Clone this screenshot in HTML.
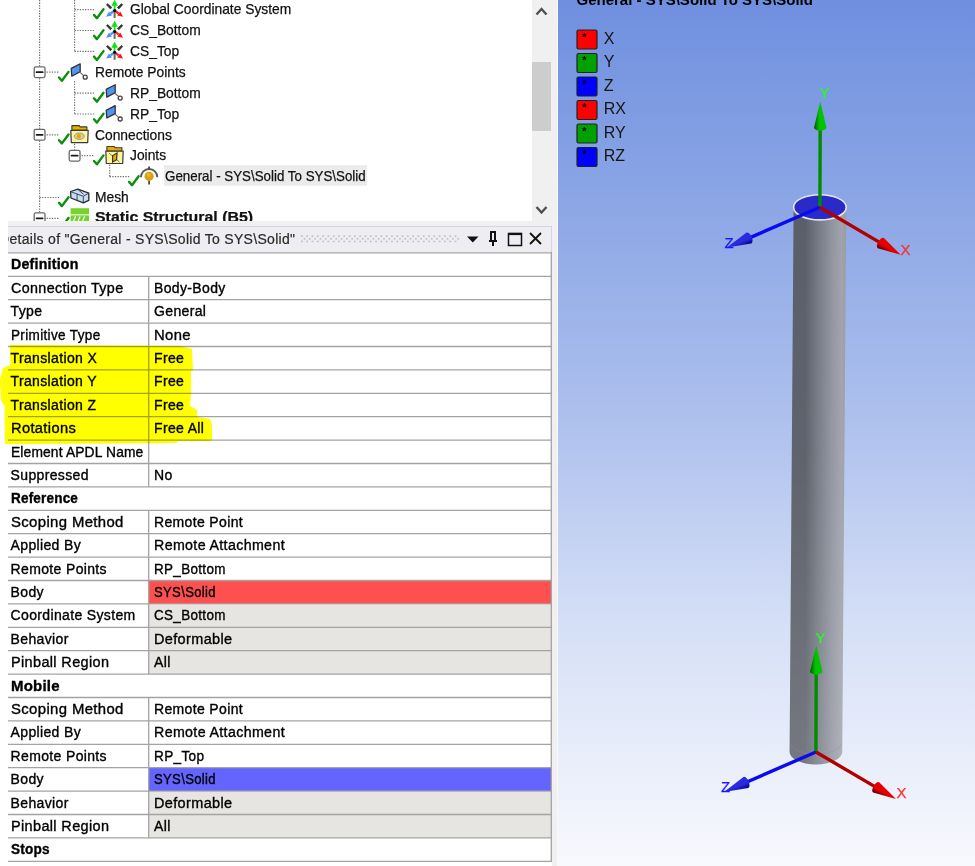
<!DOCTYPE html>
<html><head><meta charset="utf-8">
<style>
html,body{margin:0;padding:0;}
body{width:975px;height:866px;position:relative;overflow:hidden;background:#fff;font-family:"Liberation Sans",sans-serif;}
.a{position:absolute;}
.t{position:absolute;white-space:pre;font-size:14.5px;color:#111;line-height:16px;-webkit-text-stroke:0.25px #111;transform:scaleX(0.953);transform-origin:0 0;}
.c{position:absolute;white-space:pre;font-size:14px;color:#000;line-height:16px;letter-spacing:0.35px;-webkit-text-stroke:0.35px #000;}
.hl{position:absolute;left:0;height:1px;background:#a7a7a7;}
</style></head><body>
<div class="a" style="left:0;top:0;width:532px;height:221px;background:#fff;overflow:hidden"><svg class="a" style="left:0;top:0" width="532" height="221"><rect x="164" y="165.2" width="203" height="20.5" fill="#ebebeb"/><line x1="39.6" y1="0" x2="39.6" y2="66.2" stroke="#707070" stroke-width="1.2" stroke-dasharray="1.3 1.3"/><line x1="39.6" y1="78.2" x2="39.6" y2="128.8" stroke="#707070" stroke-width="1.2" stroke-dasharray="1.3 1.3"/><line x1="39.6" y1="140.8" x2="39.6" y2="212.3" stroke="#707070" stroke-width="1.2" stroke-dasharray="1.3 1.3"/><line x1="74.6" y1="0" x2="74.6" y2="51.4" stroke="#707070" stroke-width="1.2" stroke-dasharray="1.3 1.3"/><line x1="74.6" y1="81.2" x2="74.6" y2="114.0" stroke="#707070" stroke-width="1.2" stroke-dasharray="1.3 1.3"/><line x1="74.6" y1="143.8" x2="74.6" y2="149.7" stroke="#707070" stroke-width="1.2" stroke-dasharray="1.3 1.3"/><line x1="109.7" y1="164.7" x2="109.7" y2="176.6" stroke="#707070" stroke-width="1.2" stroke-dasharray="1.3 1.3"/><line x1="74.6" y1="9.6" x2="94.1" y2="9.6" stroke="#707070" stroke-width="1.2" stroke-dasharray="1.3 1.3"/><g transform="translate(105.6,0.0)"><path d="M0.9 4.7 L2.1 3.7 L6.2 7.5 L4.7 8.9Z" fill="#333" stroke="#333" stroke-width="0.8" stroke-linejoin="round"/><path d="M17.1 4.7 L15.9 3.7 L11.8 7.5 L13.3 8.9Z" fill="#333" stroke="#333" stroke-width="0.8" stroke-linejoin="round"/><line x1="9" y1="11" x2="9" y2="18" stroke="#6a6a6a" stroke-width="2"/><line x1="9" y1="10.5" x2="9" y2="5" stroke="#18e018" stroke-width="1.8"/><path d="M9 0.4 L6.2 5.6 L11.8 5.6Z" fill="#10e010" stroke="#10e010" stroke-width="0.6" stroke-linejoin="round"/><line x1="9" y1="10.5" x2="13" y2="13.5" stroke="#ff2020" stroke-width="2.2"/><path d="M17.5 16.8 L11.6 15.6 L14.6 11.6Z" fill="#ff1010"/><line x1="9" y1="10.5" x2="5" y2="13.5" stroke="#4a90f0" stroke-width="2.2"/><path d="M0.5 16.8 L3.4 11.6 L6.4 15.6Z" fill="#4a90f0"/><circle cx="9" cy="10.5" r="1.5" fill="#000"/></g><path d="M94.0 14.9 L96.9 18.2 L103.5 9.3" fill="none" stroke="#0a900a" stroke-width="2.4" stroke-linejoin="round" stroke-linecap="round"/><line x1="74.6" y1="30.5" x2="94.1" y2="30.5" stroke="#707070" stroke-width="1.2" stroke-dasharray="1.3 1.3"/><g transform="translate(105.6,20.9)"><path d="M0.9 4.7 L2.1 3.7 L6.2 7.5 L4.7 8.9Z" fill="#333" stroke="#333" stroke-width="0.8" stroke-linejoin="round"/><path d="M17.1 4.7 L15.9 3.7 L11.8 7.5 L13.3 8.9Z" fill="#333" stroke="#333" stroke-width="0.8" stroke-linejoin="round"/><line x1="9" y1="11" x2="9" y2="18" stroke="#6a6a6a" stroke-width="2"/><line x1="9" y1="10.5" x2="9" y2="5" stroke="#18e018" stroke-width="1.8"/><path d="M9 0.4 L6.2 5.6 L11.8 5.6Z" fill="#10e010" stroke="#10e010" stroke-width="0.6" stroke-linejoin="round"/><line x1="9" y1="10.5" x2="13" y2="13.5" stroke="#ff2020" stroke-width="2.2"/><path d="M17.5 16.8 L11.6 15.6 L14.6 11.6Z" fill="#ff1010"/><line x1="9" y1="10.5" x2="5" y2="13.5" stroke="#4a90f0" stroke-width="2.2"/><path d="M0.5 16.8 L3.4 11.6 L6.4 15.6Z" fill="#4a90f0"/><circle cx="9" cy="10.5" r="1.5" fill="#000"/></g><path d="M94.0 35.8 L96.9 39.1 L103.5 30.2" fill="none" stroke="#0a900a" stroke-width="2.4" stroke-linejoin="round" stroke-linecap="round"/><line x1="74.6" y1="51.4" x2="94.1" y2="51.4" stroke="#707070" stroke-width="1.2" stroke-dasharray="1.3 1.3"/><g transform="translate(105.6,41.8)"><path d="M0.9 4.7 L2.1 3.7 L6.2 7.5 L4.7 8.9Z" fill="#333" stroke="#333" stroke-width="0.8" stroke-linejoin="round"/><path d="M17.1 4.7 L15.9 3.7 L11.8 7.5 L13.3 8.9Z" fill="#333" stroke="#333" stroke-width="0.8" stroke-linejoin="round"/><line x1="9" y1="11" x2="9" y2="18" stroke="#6a6a6a" stroke-width="2"/><line x1="9" y1="10.5" x2="9" y2="5" stroke="#18e018" stroke-width="1.8"/><path d="M9 0.4 L6.2 5.6 L11.8 5.6Z" fill="#10e010" stroke="#10e010" stroke-width="0.6" stroke-linejoin="round"/><line x1="9" y1="10.5" x2="13" y2="13.5" stroke="#ff2020" stroke-width="2.2"/><path d="M17.5 16.8 L11.6 15.6 L14.6 11.6Z" fill="#ff1010"/><line x1="9" y1="10.5" x2="5" y2="13.5" stroke="#4a90f0" stroke-width="2.2"/><path d="M0.5 16.8 L3.4 11.6 L6.4 15.6Z" fill="#4a90f0"/><circle cx="9" cy="10.5" r="1.5" fill="#000"/></g><path d="M94.0 56.6 L96.9 60.0 L103.5 51.1" fill="none" stroke="#0a900a" stroke-width="2.4" stroke-linejoin="round" stroke-linecap="round"/><rect x="34.2" y="66.8" width="10.8" height="10.8" rx="1.5" fill="#fff" stroke="#6a6a6a" stroke-width="1.3"/><line x1="36.5" y1="72.2" x2="42.7" y2="72.2" stroke="#1a1a1a" stroke-width="1.7" stroke-linecap="round"/><line x1="46.6" y1="72.2" x2="59.1" y2="72.2" stroke="#707070" stroke-width="1.2" stroke-dasharray="1.3 1.3"/><g transform="translate(70.6,62.6)"><path d="M0.6 5.8 L9.6 1.2 L9.6 9.2 L1.2 13.6Z" fill="#4f94f2" stroke="#2a2a2a" stroke-width="1.2" stroke-linejoin="round"/><line x1="9.5" y1="9.8" x2="13" y2="13" stroke="#666" stroke-width="1.1"/><circle cx="14.6" cy="14.6" r="2" fill="#fff" stroke="#444" stroke-width="1.3"/></g><path d="M59.0 77.5 L61.9 80.8 L68.5 71.9" fill="none" stroke="#0a900a" stroke-width="2.4" stroke-linejoin="round" stroke-linecap="round"/><line x1="74.6" y1="93.1" x2="94.1" y2="93.1" stroke="#707070" stroke-width="1.2" stroke-dasharray="1.3 1.3"/><g transform="translate(105.6,83.5)"><path d="M0.6 5.8 L9.6 1.2 L9.6 9.2 L1.2 13.6Z" fill="#4f94f2" stroke="#2a2a2a" stroke-width="1.2" stroke-linejoin="round"/><line x1="9.5" y1="9.8" x2="13" y2="13" stroke="#666" stroke-width="1.1"/><circle cx="14.6" cy="14.6" r="2" fill="#fff" stroke="#444" stroke-width="1.3"/></g><path d="M94.0 98.4 L96.9 101.7 L103.5 92.8" fill="none" stroke="#0a900a" stroke-width="2.4" stroke-linejoin="round" stroke-linecap="round"/><line x1="74.6" y1="114.0" x2="94.1" y2="114.0" stroke="#707070" stroke-width="1.2" stroke-dasharray="1.3 1.3"/><g transform="translate(105.6,104.4)"><path d="M0.6 5.8 L9.6 1.2 L9.6 9.2 L1.2 13.6Z" fill="#4f94f2" stroke="#2a2a2a" stroke-width="1.2" stroke-linejoin="round"/><line x1="9.5" y1="9.8" x2="13" y2="13" stroke="#666" stroke-width="1.1"/><circle cx="14.6" cy="14.6" r="2" fill="#fff" stroke="#444" stroke-width="1.3"/></g><path d="M94.0 119.3 L96.9 122.6 L103.5 113.7" fill="none" stroke="#0a900a" stroke-width="2.4" stroke-linejoin="round" stroke-linecap="round"/><rect x="34.2" y="129.4" width="10.8" height="10.8" rx="1.5" fill="#fff" stroke="#6a6a6a" stroke-width="1.3"/><line x1="36.5" y1="134.8" x2="42.7" y2="134.8" stroke="#1a1a1a" stroke-width="1.7" stroke-linecap="round"/><line x1="46.6" y1="134.8" x2="59.1" y2="134.8" stroke="#707070" stroke-width="1.2" stroke-dasharray="1.3 1.3"/><g transform="translate(70.6,125.2)"><path d="M1.3 5.2 L1.3 0.4 L8.6 0.4 L9.6 1.7 L16.3 1.7 L16.3 5.2Z" fill="#e6ae00" stroke="#3a3a3a" stroke-width="1.1" stroke-linejoin="round"/><path d="M0.2 5.1 L17.6 5.1 L17.1 17.4 L0.7 17.4Z" fill="#fdf6a0" stroke="#3a3a3a" stroke-width="1.2" stroke-linejoin="round"/><ellipse cx="8.7" cy="11" rx="5" ry="3.2" fill="#d8d0a0" stroke="#9a9070" stroke-width="0.9"/><ellipse cx="8.2" cy="11" rx="2" ry="2.2" fill="#e0a800"/></g><path d="M59.0 140.2 L61.9 143.4 L68.5 134.5" fill="none" stroke="#0a900a" stroke-width="2.4" stroke-linejoin="round" stroke-linecap="round"/><rect x="69.2" y="150.3" width="10.8" height="10.8" rx="1.5" fill="#fff" stroke="#6a6a6a" stroke-width="1.3"/><line x1="71.5" y1="155.7" x2="77.7" y2="155.7" stroke="#1a1a1a" stroke-width="1.7" stroke-linecap="round"/><line x1="81.6" y1="155.7" x2="94.1" y2="155.7" stroke="#707070" stroke-width="1.2" stroke-dasharray="1.3 1.3"/><g transform="translate(105.6,146.1)"><path d="M1.3 5.2 L1.3 0.4 L8.6 0.4 L9.6 1.7 L16.3 1.7 L16.3 5.2Z" fill="#e6ae00" stroke="#3a3a3a" stroke-width="1.1" stroke-linejoin="round"/><path d="M0.2 5.1 L17.6 5.1 L17.1 17.4 L0.7 17.4Z" fill="#fdf6a0" stroke="#3a3a3a" stroke-width="1.2" stroke-linejoin="round"/><path d="M3.5 7 L14 16" stroke="#555" stroke-width="0.8"/><path d="M7 9.5 L11.5 6.8 L11 13.5 L7 16Z" fill="#e8a800" stroke="#2a2a2a" stroke-width="1.1"/></g><path d="M94.0 161.0 L96.9 164.3 L103.5 155.4" fill="none" stroke="#0a900a" stroke-width="2.4" stroke-linejoin="round" stroke-linecap="round"/><line x1="109.7" y1="176.6" x2="129.2" y2="176.6" stroke="#707070" stroke-width="1.2" stroke-dasharray="1.3 1.3"/><g transform="translate(140.7,167.0)"><path d="M0.2 10.2 A8.2 8.2 0 0 1 16.6 10.2" fill="none" stroke="#555" stroke-width="1.8"/><line x1="8.4" y1="-0.5" x2="8.4" y2="2.5" stroke="#444" stroke-width="1.8"/><line x1="8.4" y1="12" x2="8.4" y2="17.5" stroke="#4a4a4a" stroke-width="1.8"/><circle cx="8.4" cy="9.3" r="4.6" fill="#d9a20c"/><circle cx="8" cy="8" r="2" fill="#e8c050" opacity="0.7"/></g><path d="M129.1 181.9 L132.0 185.2 L138.6 176.3" fill="none" stroke="#0a900a" stroke-width="2.4" stroke-linejoin="round" stroke-linecap="round"/><line x1="39.6" y1="197.5" x2="59.1" y2="197.5" stroke="#707070" stroke-width="1.2" stroke-dasharray="1.3 1.3"/><g transform="translate(70.6,187.9)"><path d="M0 3.6 L7.3 1.3 L18.2 5.2 L18.2 12.5 L12.7 14.9 L0.3 10.1Z" fill="#c4dcfa" stroke="#2a2a2a" stroke-width="1.3" stroke-linejoin="round"/><path d="M0.2 3.8 L12.7 8.4 L18 5.3 M12.7 8.4 L12.7 14.6 M6.5 6 L6.5 12.3 M7.3 1.5 L13 6.5" fill="none" stroke="#3a3a3a" stroke-width="0.9"/></g><path d="M59.0 202.8 L61.9 206.1 L68.5 197.2" fill="none" stroke="#0a900a" stroke-width="2.4" stroke-linejoin="round" stroke-linecap="round"/><rect x="34.2" y="212.9" width="10.8" height="10.8" rx="1.5" fill="#fff" stroke="#6a6a6a" stroke-width="1.3"/><line x1="36.5" y1="218.3" x2="42.7" y2="218.3" stroke="#1a1a1a" stroke-width="1.7" stroke-linecap="round"/><line x1="46.6" y1="218.3" x2="59.1" y2="218.3" stroke="#707070" stroke-width="1.2" stroke-dasharray="1.3 1.3"/><g transform="translate(70.6,208.2)"><rect x="0" y="0" width="18.5" height="14" fill="#78d22e"/><rect x="0" y="6.0" width="18.5" height="1.2" fill="#f0fff0"/><path d="M3 13 L5 8 M7.5 13 L9.5 8 M12 13 L14 8" stroke="#f0fff0" stroke-width="1.3"/></g><path d="M59.0 223.7 L61.9 226.9 L68.5 218.0" fill="none" stroke="#0a900a" stroke-width="2.4" stroke-linejoin="round" stroke-linecap="round"/></svg><div class="t" style="left:130.3px;top:1.3px;">Global Coordinate System</div><div class="t" style="left:130.3px;top:22.2px;">CS_Bottom</div><div class="t" style="left:130.3px;top:43.0px;">CS_Top</div><div class="t" style="left:95.3px;top:63.9px;">Remote Points</div><div class="t" style="left:130.3px;top:84.8px;">RP_Bottom</div><div class="t" style="left:130.3px;top:105.7px;">RP_Top</div><div class="t" style="left:95.3px;top:126.5px;">Connections</div><div class="t" style="left:130.3px;top:147.4px;">Joints</div><div class="t" style="left:165.4px;top:168.3px;transform:scaleX(0.92);">General - SYS\Solid To SYS\Solid</div><div class="t" style="left:95.3px;top:189.2px;">Mesh</div><div class="t" style="left:95.3px;top:209.2px;font-weight:bold;font-size:15.5px;transform:scaleX(1.025);">Static Structural (B5)</div></div><div class="a" style="left:532px;top:0;width:25px;height:221px;background:#f0f0f0"></div><div class="a" style="left:532px;top:62px;width:19px;height:69px;background:#cdcdcd"></div><svg class="a" style="left:532px;top:0" width="25" height="221"><path d="M4.5 14.5 L9.5 9 L14.5 14.5" fill="none" stroke="#505050" stroke-width="2.4"/><path d="M4.5 207 L9.5 212.5 L14.5 207" fill="none" stroke="#505050" stroke-width="2.4"/></svg><div class="a" style="left:8px;top:221px;width:549px;height:645px;background:#f0f0f0"></div><div class="a" style="left:8px;top:226px;width:544px;height:26px;background:#eeeef2;border-top:1px solid #d4d4e4;border-right:1px solid #d4d4e4;box-sizing:border-box;overflow:hidden"><div class="a" style="left:-9px;top:3.6px;white-space:pre;font-size:14px;color:#2a2a2a;letter-spacing:0.3px;-webkit-text-stroke:0.2px #2a2a2a">Details of "General - SYS\Solid To SYS\Solid"</div></div><svg class="a" style="left:301px;top:235px" width="160" height="9"><rect x="0.00" y="0.30" width="1.7" height="1.7" fill="#c0c0c6"/><rect x="0.00" y="5.60" width="1.7" height="1.7" fill="#c0c0c6"/><rect x="2.65" y="2.95" width="1.7" height="1.7" fill="#c0c0c6"/><rect x="5.30" y="0.30" width="1.7" height="1.7" fill="#c0c0c6"/><rect x="5.30" y="5.60" width="1.7" height="1.7" fill="#c0c0c6"/><rect x="7.95" y="2.95" width="1.7" height="1.7" fill="#c0c0c6"/><rect x="10.60" y="0.30" width="1.7" height="1.7" fill="#c0c0c6"/><rect x="10.60" y="5.60" width="1.7" height="1.7" fill="#c0c0c6"/><rect x="13.25" y="2.95" width="1.7" height="1.7" fill="#c0c0c6"/><rect x="15.90" y="0.30" width="1.7" height="1.7" fill="#c0c0c6"/><rect x="15.90" y="5.60" width="1.7" height="1.7" fill="#c0c0c6"/><rect x="18.55" y="2.95" width="1.7" height="1.7" fill="#c0c0c6"/><rect x="21.20" y="0.30" width="1.7" height="1.7" fill="#c0c0c6"/><rect x="21.20" y="5.60" width="1.7" height="1.7" fill="#c0c0c6"/><rect x="23.85" y="2.95" width="1.7" height="1.7" fill="#c0c0c6"/><rect x="26.50" y="0.30" width="1.7" height="1.7" fill="#c0c0c6"/><rect x="26.50" y="5.60" width="1.7" height="1.7" fill="#c0c0c6"/><rect x="29.15" y="2.95" width="1.7" height="1.7" fill="#c0c0c6"/><rect x="31.80" y="0.30" width="1.7" height="1.7" fill="#c0c0c6"/><rect x="31.80" y="5.60" width="1.7" height="1.7" fill="#c0c0c6"/><rect x="34.45" y="2.95" width="1.7" height="1.7" fill="#c0c0c6"/><rect x="37.10" y="0.30" width="1.7" height="1.7" fill="#c0c0c6"/><rect x="37.10" y="5.60" width="1.7" height="1.7" fill="#c0c0c6"/><rect x="39.75" y="2.95" width="1.7" height="1.7" fill="#c0c0c6"/><rect x="42.40" y="0.30" width="1.7" height="1.7" fill="#c0c0c6"/><rect x="42.40" y="5.60" width="1.7" height="1.7" fill="#c0c0c6"/><rect x="45.05" y="2.95" width="1.7" height="1.7" fill="#c0c0c6"/><rect x="47.70" y="0.30" width="1.7" height="1.7" fill="#c0c0c6"/><rect x="47.70" y="5.60" width="1.7" height="1.7" fill="#c0c0c6"/><rect x="50.35" y="2.95" width="1.7" height="1.7" fill="#c0c0c6"/><rect x="53.00" y="0.30" width="1.7" height="1.7" fill="#c0c0c6"/><rect x="53.00" y="5.60" width="1.7" height="1.7" fill="#c0c0c6"/><rect x="55.65" y="2.95" width="1.7" height="1.7" fill="#c0c0c6"/><rect x="58.30" y="0.30" width="1.7" height="1.7" fill="#c0c0c6"/><rect x="58.30" y="5.60" width="1.7" height="1.7" fill="#c0c0c6"/><rect x="60.95" y="2.95" width="1.7" height="1.7" fill="#c0c0c6"/><rect x="63.60" y="0.30" width="1.7" height="1.7" fill="#c0c0c6"/><rect x="63.60" y="5.60" width="1.7" height="1.7" fill="#c0c0c6"/><rect x="66.25" y="2.95" width="1.7" height="1.7" fill="#c0c0c6"/><rect x="68.90" y="0.30" width="1.7" height="1.7" fill="#c0c0c6"/><rect x="68.90" y="5.60" width="1.7" height="1.7" fill="#c0c0c6"/><rect x="71.55" y="2.95" width="1.7" height="1.7" fill="#c0c0c6"/><rect x="74.20" y="0.30" width="1.7" height="1.7" fill="#c0c0c6"/><rect x="74.20" y="5.60" width="1.7" height="1.7" fill="#c0c0c6"/><rect x="76.85" y="2.95" width="1.7" height="1.7" fill="#c0c0c6"/><rect x="79.50" y="0.30" width="1.7" height="1.7" fill="#c0c0c6"/><rect x="79.50" y="5.60" width="1.7" height="1.7" fill="#c0c0c6"/><rect x="82.15" y="2.95" width="1.7" height="1.7" fill="#c0c0c6"/><rect x="84.80" y="0.30" width="1.7" height="1.7" fill="#c0c0c6"/><rect x="84.80" y="5.60" width="1.7" height="1.7" fill="#c0c0c6"/><rect x="87.45" y="2.95" width="1.7" height="1.7" fill="#c0c0c6"/><rect x="90.10" y="0.30" width="1.7" height="1.7" fill="#c0c0c6"/><rect x="90.10" y="5.60" width="1.7" height="1.7" fill="#c0c0c6"/><rect x="92.75" y="2.95" width="1.7" height="1.7" fill="#c0c0c6"/><rect x="95.40" y="0.30" width="1.7" height="1.7" fill="#c0c0c6"/><rect x="95.40" y="5.60" width="1.7" height="1.7" fill="#c0c0c6"/><rect x="98.05" y="2.95" width="1.7" height="1.7" fill="#c0c0c6"/><rect x="100.70" y="0.30" width="1.7" height="1.7" fill="#c0c0c6"/><rect x="100.70" y="5.60" width="1.7" height="1.7" fill="#c0c0c6"/><rect x="103.35" y="2.95" width="1.7" height="1.7" fill="#c0c0c6"/><rect x="106.00" y="0.30" width="1.7" height="1.7" fill="#c0c0c6"/><rect x="106.00" y="5.60" width="1.7" height="1.7" fill="#c0c0c6"/><rect x="108.65" y="2.95" width="1.7" height="1.7" fill="#c0c0c6"/><rect x="111.30" y="0.30" width="1.7" height="1.7" fill="#c0c0c6"/><rect x="111.30" y="5.60" width="1.7" height="1.7" fill="#c0c0c6"/><rect x="113.95" y="2.95" width="1.7" height="1.7" fill="#c0c0c6"/><rect x="116.60" y="0.30" width="1.7" height="1.7" fill="#c0c0c6"/><rect x="116.60" y="5.60" width="1.7" height="1.7" fill="#c0c0c6"/><rect x="119.25" y="2.95" width="1.7" height="1.7" fill="#c0c0c6"/><rect x="121.90" y="0.30" width="1.7" height="1.7" fill="#c0c0c6"/><rect x="121.90" y="5.60" width="1.7" height="1.7" fill="#c0c0c6"/><rect x="124.55" y="2.95" width="1.7" height="1.7" fill="#c0c0c6"/><rect x="127.20" y="0.30" width="1.7" height="1.7" fill="#c0c0c6"/><rect x="127.20" y="5.60" width="1.7" height="1.7" fill="#c0c0c6"/><rect x="129.85" y="2.95" width="1.7" height="1.7" fill="#c0c0c6"/><rect x="132.50" y="0.30" width="1.7" height="1.7" fill="#c0c0c6"/><rect x="132.50" y="5.60" width="1.7" height="1.7" fill="#c0c0c6"/><rect x="135.15" y="2.95" width="1.7" height="1.7" fill="#c0c0c6"/><rect x="137.80" y="0.30" width="1.7" height="1.7" fill="#c0c0c6"/><rect x="137.80" y="5.60" width="1.7" height="1.7" fill="#c0c0c6"/><rect x="140.45" y="2.95" width="1.7" height="1.7" fill="#c0c0c6"/><rect x="143.10" y="0.30" width="1.7" height="1.7" fill="#c0c0c6"/><rect x="143.10" y="5.60" width="1.7" height="1.7" fill="#c0c0c6"/><rect x="145.75" y="2.95" width="1.7" height="1.7" fill="#c0c0c6"/><rect x="148.40" y="0.30" width="1.7" height="1.7" fill="#c0c0c6"/><rect x="148.40" y="5.60" width="1.7" height="1.7" fill="#c0c0c6"/><rect x="151.05" y="2.95" width="1.7" height="1.7" fill="#c0c0c6"/><rect x="153.70" y="0.30" width="1.7" height="1.7" fill="#c0c0c6"/><rect x="153.70" y="5.60" width="1.7" height="1.7" fill="#c0c0c6"/><rect x="156.35" y="2.95" width="1.7" height="1.7" fill="#c0c0c6"/></svg><svg class="a" style="left:460px;top:226px" width="92" height="26"><path d="M7 10.5 L18.5 10.5 L12.75 16.5Z" fill="#111"/><path d="M30 6 L36 6 M31 6 L31 15 M35 6 L35 15 M29 15 L37 15 M33 15 L33 20" fill="none" stroke="#111" stroke-width="2"/><rect x="48.5" y="7.5" width="13" height="12" fill="none" stroke="#111" stroke-width="1.5"/><line x1="48" y1="8" x2="62" y2="8" stroke="#111" stroke-width="2.2"/><path d="M70 7 L81 18 M81 7 L70 18" stroke="#111" stroke-width="1.8"/></svg><div class="a" style="left:8px;top:252px;width:544px;height:614px;background:#fff"></div><div class="a" style="left:149px;top:581.2px;width:402px;height:22.8px;background:#ff5050"></div><div class="a" style="left:149px;top:604.6px;width:402px;height:22.8px;background:#e7e5e2"></div><div class="a" style="left:149px;top:628.0px;width:402px;height:22.8px;background:#e7e5e2"></div><div class="a" style="left:149px;top:651.4px;width:402px;height:22.8px;background:#e7e5e2"></div><div class="a" style="left:149px;top:768.4px;width:402px;height:22.8px;background:#6464ff"></div><div class="a" style="left:149px;top:791.8px;width:402px;height:22.8px;background:#e7e5e2"></div><div class="a" style="left:149px;top:815.2px;width:402px;height:22.8px;background:#e7e5e2"></div><svg class="a" style="left:0;top:0" width="560" height="866"><line x1="8" y1="252.90" x2="552" y2="252.90" stroke="#a3a3a3" stroke-width="1.3"/><line x1="8" y1="276.30" x2="552" y2="276.30" stroke="#a3a3a3" stroke-width="1.3"/><line x1="8" y1="299.70" x2="552" y2="299.70" stroke="#a3a3a3" stroke-width="1.3"/><line x1="8" y1="323.10" x2="552" y2="323.10" stroke="#a3a3a3" stroke-width="1.3"/><line x1="8" y1="346.50" x2="552" y2="346.50" stroke="#a3a3a3" stroke-width="1.3"/><line x1="8" y1="369.90" x2="552" y2="369.90" stroke="#a3a3a3" stroke-width="1.3"/><line x1="8" y1="393.30" x2="552" y2="393.30" stroke="#a3a3a3" stroke-width="1.3"/><line x1="8" y1="416.70" x2="552" y2="416.70" stroke="#a3a3a3" stroke-width="1.3"/><line x1="8" y1="440.10" x2="552" y2="440.10" stroke="#a3a3a3" stroke-width="1.3"/><line x1="8" y1="463.50" x2="552" y2="463.50" stroke="#a3a3a3" stroke-width="1.3"/><line x1="8" y1="486.90" x2="552" y2="486.90" stroke="#a3a3a3" stroke-width="1.3"/><line x1="8" y1="510.30" x2="552" y2="510.30" stroke="#a3a3a3" stroke-width="1.3"/><line x1="8" y1="533.70" x2="552" y2="533.70" stroke="#a3a3a3" stroke-width="1.3"/><line x1="8" y1="557.10" x2="552" y2="557.10" stroke="#a3a3a3" stroke-width="1.3"/><line x1="8" y1="580.50" x2="552" y2="580.50" stroke="#a3a3a3" stroke-width="1.3"/><line x1="8" y1="603.90" x2="552" y2="603.90" stroke="#a3a3a3" stroke-width="1.3"/><line x1="8" y1="627.30" x2="552" y2="627.30" stroke="#a3a3a3" stroke-width="1.3"/><line x1="8" y1="650.70" x2="552" y2="650.70" stroke="#a3a3a3" stroke-width="1.3"/><line x1="8" y1="674.10" x2="552" y2="674.10" stroke="#a3a3a3" stroke-width="1.3"/><line x1="8" y1="697.50" x2="552" y2="697.50" stroke="#a3a3a3" stroke-width="1.3"/><line x1="8" y1="720.90" x2="552" y2="720.90" stroke="#a3a3a3" stroke-width="1.3"/><line x1="8" y1="744.30" x2="552" y2="744.30" stroke="#a3a3a3" stroke-width="1.3"/><line x1="8" y1="767.70" x2="552" y2="767.70" stroke="#a3a3a3" stroke-width="1.3"/><line x1="8" y1="791.10" x2="552" y2="791.10" stroke="#a3a3a3" stroke-width="1.3"/><line x1="8" y1="814.50" x2="552" y2="814.50" stroke="#a3a3a3" stroke-width="1.3"/><line x1="8" y1="837.90" x2="552" y2="837.90" stroke="#a3a3a3" stroke-width="1.3"/><line x1="8" y1="861.30" x2="552" y2="861.30" stroke="#a3a3a3" stroke-width="1.3"/><line x1="148.7" y1="276.30" x2="148.7" y2="299.70" stroke="#a3a3a3" stroke-width="1.3"/><line x1="148.7" y1="299.70" x2="148.7" y2="323.10" stroke="#a3a3a3" stroke-width="1.3"/><line x1="148.7" y1="323.10" x2="148.7" y2="346.50" stroke="#a3a3a3" stroke-width="1.3"/><line x1="148.7" y1="346.50" x2="148.7" y2="369.90" stroke="#a3a3a3" stroke-width="1.3"/><line x1="148.7" y1="369.90" x2="148.7" y2="393.30" stroke="#a3a3a3" stroke-width="1.3"/><line x1="148.7" y1="393.30" x2="148.7" y2="416.70" stroke="#a3a3a3" stroke-width="1.3"/><line x1="148.7" y1="416.70" x2="148.7" y2="440.10" stroke="#a3a3a3" stroke-width="1.3"/><line x1="148.7" y1="440.10" x2="148.7" y2="463.50" stroke="#a3a3a3" stroke-width="1.3"/><line x1="148.7" y1="463.50" x2="148.7" y2="486.90" stroke="#a3a3a3" stroke-width="1.3"/><line x1="148.7" y1="510.30" x2="148.7" y2="533.70" stroke="#a3a3a3" stroke-width="1.3"/><line x1="148.7" y1="533.70" x2="148.7" y2="557.10" stroke="#a3a3a3" stroke-width="1.3"/><line x1="148.7" y1="557.10" x2="148.7" y2="580.50" stroke="#a3a3a3" stroke-width="1.3"/><line x1="148.7" y1="580.50" x2="148.7" y2="603.90" stroke="#a3a3a3" stroke-width="1.3"/><line x1="148.7" y1="603.90" x2="148.7" y2="627.30" stroke="#a3a3a3" stroke-width="1.3"/><line x1="148.7" y1="627.30" x2="148.7" y2="650.70" stroke="#a3a3a3" stroke-width="1.3"/><line x1="148.7" y1="650.70" x2="148.7" y2="674.10" stroke="#a3a3a3" stroke-width="1.3"/><line x1="148.7" y1="697.50" x2="148.7" y2="720.90" stroke="#a3a3a3" stroke-width="1.3"/><line x1="148.7" y1="720.90" x2="148.7" y2="744.30" stroke="#a3a3a3" stroke-width="1.3"/><line x1="148.7" y1="744.30" x2="148.7" y2="767.70" stroke="#a3a3a3" stroke-width="1.3"/><line x1="148.7" y1="767.70" x2="148.7" y2="791.10" stroke="#a3a3a3" stroke-width="1.3"/><line x1="148.7" y1="791.10" x2="148.7" y2="814.50" stroke="#a3a3a3" stroke-width="1.3"/><line x1="148.7" y1="814.50" x2="148.7" y2="837.90" stroke="#a3a3a3" stroke-width="1.3"/><line x1="551.3" y1="252" x2="551.3" y2="861.9" stroke="#a3a3a3" stroke-width="1.3"/></svg><div class="c" style="left:10.6px;top:256.4px;font-weight:bold;letter-spacing:0.2px;transform:scaleX(1.015);transform-origin:0 0">Definition</div><div class="c" style="left:10.6px;top:279.8px;transform:scaleX(1.022);transform-origin:0 0">Connection Type</div><div class="c" style="left:154px;top:279.8px;transform:scaleX(1.0);transform-origin:0 0">Body-Body</div><div class="c" style="left:10.6px;top:303.2px;transform:scaleX(1.0);transform-origin:0 0">Type</div><div class="c" style="left:154px;top:303.2px;transform:scaleX(1.0);transform-origin:0 0">General</div><div class="c" style="left:10.6px;top:326.6px;transform:scaleX(0.967);transform-origin:0 0">Primitive Type</div><div class="c" style="left:154px;top:326.6px;transform:scaleX(1.06);transform-origin:0 0">None</div><div class="c" style="left:10.6px;top:350.0px;transform:scaleX(1.0);transform-origin:0 0">Translation X</div><div class="c" style="left:154px;top:350.0px;transform:scaleX(1.0);transform-origin:0 0">Free</div><div class="c" style="left:10.6px;top:373.4px;transform:scaleX(1.0);transform-origin:0 0">Translation Y</div><div class="c" style="left:154px;top:373.4px;transform:scaleX(1.0);transform-origin:0 0">Free</div><div class="c" style="left:10.6px;top:396.8px;transform:scaleX(1.0);transform-origin:0 0">Translation Z</div><div class="c" style="left:154px;top:396.8px;transform:scaleX(1.0);transform-origin:0 0">Free</div><div class="c" style="left:10.6px;top:420.2px;transform:scaleX(1.045);transform-origin:0 0">Rotations</div><div class="c" style="left:154px;top:420.2px;transform:scaleX(1.0);transform-origin:0 0">Free All</div><div class="c" style="left:10.6px;top:443.6px;letter-spacing:0.15px;transform:scaleX(0.986);transform-origin:0 0">Element APDL Name</div><div class="c" style="left:10.6px;top:467.0px;transform:scaleX(1.0);transform-origin:0 0">Suppressed</div><div class="c" style="left:154px;top:467.0px;transform:scaleX(1.0);transform-origin:0 0">No</div><div class="c" style="left:10.6px;top:490.4px;font-weight:bold;letter-spacing:0.2px;transform:scaleX(0.965);transform-origin:0 0">Reference</div><div class="c" style="left:10.6px;top:513.8px;transform:scaleX(1.063);transform-origin:0 0">Scoping Method</div><div class="c" style="left:154px;top:513.8px;transform:scaleX(1.0);transform-origin:0 0">Remote Point</div><div class="c" style="left:10.6px;top:537.2px;transform:scaleX(1.0);transform-origin:0 0">Applied By</div><div class="c" style="left:154px;top:537.2px;transform:scaleX(1.016);transform-origin:0 0">Remote Attachment</div><div class="c" style="left:10.6px;top:560.6px;transform:scaleX(1.0);transform-origin:0 0">Remote Points</div><div class="c" style="left:154px;top:560.6px;transform:scaleX(0.96);transform-origin:0 0">RP_Bottom</div><div class="c" style="left:10.6px;top:584.0px;transform:scaleX(1.0);transform-origin:0 0">Body</div><div class="c" style="left:154px;top:584.0px;transform:scaleX(0.935);transform-origin:0 0">SYS\Solid</div><div class="c" style="left:10.6px;top:607.4px;transform:scaleX(1.0);transform-origin:0 0">Coordinate System</div><div class="c" style="left:154px;top:607.4px;transform:scaleX(0.96);transform-origin:0 0">CS_Bottom</div><div class="c" style="left:10.6px;top:630.8px;transform:scaleX(1.0);transform-origin:0 0">Behavior</div><div class="c" style="left:154px;top:630.8px;transform:scaleX(1.034);transform-origin:0 0">Deformable</div><div class="c" style="left:10.6px;top:654.2px;transform:scaleX(1.033);transform-origin:0 0">Pinball Region</div><div class="c" style="left:154px;top:654.2px;transform:scaleX(1.0);transform-origin:0 0">All</div><div class="c" style="left:10.6px;top:677.6px;font-weight:bold;letter-spacing:0.2px;transform:scaleX(1.07);transform-origin:0 0">Mobile</div><div class="c" style="left:10.6px;top:701.0px;transform:scaleX(1.063);transform-origin:0 0">Scoping Method</div><div class="c" style="left:154px;top:701.0px;transform:scaleX(1.0);transform-origin:0 0">Remote Point</div><div class="c" style="left:10.6px;top:724.4px;transform:scaleX(1.0);transform-origin:0 0">Applied By</div><div class="c" style="left:154px;top:724.4px;transform:scaleX(1.016);transform-origin:0 0">Remote Attachment</div><div class="c" style="left:10.6px;top:747.8px;transform:scaleX(1.0);transform-origin:0 0">Remote Points</div><div class="c" style="left:154px;top:747.8px;transform:scaleX(0.97);transform-origin:0 0">RP_Top</div><div class="c" style="left:10.6px;top:771.2px;transform:scaleX(1.0);transform-origin:0 0">Body</div><div class="c" style="left:154px;top:771.2px;transform:scaleX(0.935);transform-origin:0 0">SYS\Solid</div><div class="c" style="left:10.6px;top:794.6px;transform:scaleX(1.0);transform-origin:0 0">Behavior</div><div class="c" style="left:154px;top:794.6px;transform:scaleX(1.034);transform-origin:0 0">Deformable</div><div class="c" style="left:10.6px;top:818.0px;transform:scaleX(1.033);transform-origin:0 0">Pinball Region</div><div class="c" style="left:154px;top:818.0px;transform:scaleX(1.0);transform-origin:0 0">All</div><div class="c" style="left:10.6px;top:841.4px;font-weight:bold;letter-spacing:0.2px;transform:scaleX(0.97);transform-origin:0 0">Stops</div><svg class="a" style="left:0;top:340px;mix-blend-mode:multiply" width="220" height="110"><path d="M10 5 L180 6 L192 9 L193 30 L191 31 L191 54 L190 66 L197 70 L197 77 L210 79 L212 84 L212 100 L210 101 L178 101 L176 103 L30 104 L5 104 L4.5 66 L1 60 L0 40 L3 28 L8 26 L10 26Z" fill="#ffff00"/></svg><div class="a" style="left:557px;top:0;width:1px;height:866px;background:#f8f8fa"></div><div class="a" style="left:558px;top:0;width:417px;height:866px;background:linear-gradient(to bottom,#6f8fdf 0%,#8ea8e6 25%,#b0c2ee 50%,#d5dff6 72%,#f8f9fd 100%)"></div><svg class="a" style="left:558px;top:0" width="417" height="866"><defs><linearGradient id="cyl" x1="0" x2="1" y1="0" y2="0"><stop offset="0" stop-color="#5a5e67"/><stop offset="0.28" stop-color="#5b5f69"/><stop offset="0.5" stop-color="#767a84"/><stop offset="0.75" stop-color="#9195a0"/><stop offset="0.92" stop-color="#a0a3ab"/><stop offset="1" stop-color="#999ca3"/></linearGradient><linearGradient id="cylv" x1="0" x2="0" y1="0" y2="1"><stop offset="0" stop-color="#ffffff" stop-opacity="0"/><stop offset="0.45" stop-color="#ffffff" stop-opacity="0.03"/><stop offset="1" stop-color="#ffffff" stop-opacity="0.16"/></linearGradient></defs><path d="M235.6 207.3 L231.6 752.0 A26.3 12.5 0 0 0 284.2 752.0 L288.2 207.3Z" fill="url(#cyl)"/><path d="M235.6 207.3 L231.6 752.0 A26.3 12.5 0 0 0 284.2 752.0 L288.2 207.3Z" fill="url(#cylv)"/><path d="M232.1 744.0 A26.3 12.5 0 0 0 283.7 744.0" fill="none" stroke="#8a8c90" stroke-width="0.7" opacity="0.5"/><ellipse cx="261.9" cy="207.3" rx="26.3" ry="12.6" fill="#2a2ac8" stroke="#e4e6f0" stroke-width="1.6"/><line x1="261.9" y1="207.3" x2="262.2" y2="125.5" stroke="#008c00" stroke-width="3.4"/><defs><linearGradient id="cg1" gradientUnits="userSpaceOnUse" x1="268.4" y1="127.5" x2="256.0" y2="127.5"><stop offset="0" stop-color="#00c400"/><stop offset="0.55" stop-color="#00c400"/><stop offset="1" stop-color="#005a00"/></linearGradient></defs><path d="M262.3 101.5 L268.4 127.5 A6.2 3.1 0.2 0 1 256.0 127.5Z" fill="url(#cg1)"/><line x1="261.9" y1="207.3" x2="189.1" y2="238.9" stroke="#0a0af0" stroke-width="3.4"/><defs><linearGradient id="cg2" gradientUnits="userSpaceOnUse" x1="188.5" y1="232.6" x2="193.3" y2="243.6"><stop offset="0" stop-color="#2a2ae0"/><stop offset="0.55" stop-color="#2a2ae0"/><stop offset="1" stop-color="#000080"/></linearGradient></defs><path d="M168.9 247.6 L188.5 232.6 A6.0 3.0 -113.4 0 1 193.3 243.6Z" fill="url(#cg2)"/><line x1="261.9" y1="207.3" x2="324.6" y2="244.1" stroke="#b00000" stroke-width="3.4"/><defs><linearGradient id="cg3" gradientUnits="userSpaceOnUse" x1="325.9" y1="237.9" x2="319.8" y2="248.2"><stop offset="0" stop-color="#e80000"/><stop offset="0.55" stop-color="#e80000"/><stop offset="1" stop-color="#500000"/></linearGradient></defs><path d="M342.7 254.7 L319.8 248.2 A6.0 3.0 120.4 0 1 325.9 237.9Z" fill="url(#cg3)"/><text x="261.5" y="98.3" font-family="Liberation Sans" font-size="15" fill="#22ff22" stroke="#22ff22" stroke-width="0.25">Y</text><text x="166.5" y="248.0" font-family="Liberation Sans" font-size="15" fill="#1a1aff" stroke="#1a1aff" stroke-width="0.25">Z</text><text x="342.5" y="254.7" font-family="Liberation Sans" font-size="15" fill="#ff3030" stroke="#ff3030" stroke-width="0.25">X</text><line x1="257.9" y1="752.0" x2="258.2" y2="669.4" stroke="#008c00" stroke-width="3.4"/><defs><linearGradient id="cg4" gradientUnits="userSpaceOnUse" x1="264.4" y1="671.4" x2="252.0" y2="671.4"><stop offset="0" stop-color="#00c400"/><stop offset="0.55" stop-color="#00c400"/><stop offset="1" stop-color="#005a00"/></linearGradient></defs><path d="M258.3 645.4 L264.4 671.4 A6.2 3.1 0.2 0 1 252.0 671.4Z" fill="url(#cg4)"/><line x1="257.9" y1="752.0" x2="186.1" y2="783.2" stroke="#0a0af0" stroke-width="3.4"/><defs><linearGradient id="cg5" gradientUnits="userSpaceOnUse" x1="185.5" y1="776.9" x2="190.3" y2="787.9"><stop offset="0" stop-color="#2a2ae0"/><stop offset="0.55" stop-color="#2a2ae0"/><stop offset="1" stop-color="#000080"/></linearGradient></defs><path d="M165.9 792.0 L185.5 776.9 A6.0 3.0 -113.5 0 1 190.3 787.9Z" fill="url(#cg5)"/><line x1="257.9" y1="752.0" x2="319.9" y2="788.4" stroke="#b00000" stroke-width="3.4"/><defs><linearGradient id="cg6" gradientUnits="userSpaceOnUse" x1="321.2" y1="782.2" x2="315.1" y2="792.5"><stop offset="0" stop-color="#e80000"/><stop offset="0.55" stop-color="#e80000"/><stop offset="1" stop-color="#500000"/></linearGradient></defs><path d="M338.0 799.0 L315.1 792.5 A6.0 3.0 120.4 0 1 321.2 782.2Z" fill="url(#cg6)"/><text x="257.5" y="642.5" font-family="Liberation Sans" font-size="15" fill="#22ff22" stroke="#22ff22" stroke-width="0.25">Y</text><text x="163.0" y="792.0" font-family="Liberation Sans" font-size="15" fill="#1a1aff" stroke="#1a1aff" stroke-width="0.25">Z</text><text x="338.5" y="798.2" font-family="Liberation Sans" font-size="15" fill="#ff3030" stroke="#ff3030" stroke-width="0.25">X</text><rect x="19.0" y="30.0" width="20" height="19" rx="1.5" fill="#ff0000" stroke="#222" stroke-width="1.2"/><text x="24.2" y="40.5" font-family="Liberation Sans" font-size="11" font-weight="bold" fill="#000">*</text><text x="45.8" y="43.9" font-family="Liberation Sans" font-size="16" fill="#151515">X</text><rect x="19.0" y="53.5" width="20" height="19" rx="1.5" fill="#00a000" stroke="#222" stroke-width="1.2"/><text x="24.2" y="64.0" font-family="Liberation Sans" font-size="11" font-weight="bold" fill="#000">*</text><text x="45.8" y="67.4" font-family="Liberation Sans" font-size="16" fill="#151515">Y</text><rect x="19.0" y="77.0" width="20" height="19" rx="1.5" fill="#0000ff" stroke="#222" stroke-width="1.2"/><text x="24.2" y="87.5" font-family="Liberation Sans" font-size="11" font-weight="bold" fill="#000">*</text><text x="45.8" y="90.9" font-family="Liberation Sans" font-size="16" fill="#151515">Z</text><rect x="19.0" y="100.5" width="20" height="19" rx="1.5" fill="#ff0000" stroke="#222" stroke-width="1.2"/><text x="24.2" y="111.0" font-family="Liberation Sans" font-size="11" font-weight="bold" fill="#000">*</text><text x="45.8" y="114.4" font-family="Liberation Sans" font-size="16" fill="#151515">RX</text><rect x="19.0" y="124.0" width="20" height="19" rx="1.5" fill="#00a000" stroke="#222" stroke-width="1.2"/><text x="24.2" y="134.5" font-family="Liberation Sans" font-size="11" font-weight="bold" fill="#000">*</text><text x="45.8" y="137.9" font-family="Liberation Sans" font-size="16" fill="#151515">RY</text><rect x="19.0" y="147.5" width="20" height="19" rx="1.5" fill="#0000ff" stroke="#222" stroke-width="1.2"/><text x="24.2" y="158.0" font-family="Liberation Sans" font-size="11" font-weight="bold" fill="#000">*</text><text x="45.8" y="161.4" font-family="Liberation Sans" font-size="16" fill="#151515">RZ</text><text x="18.5" y="5" font-family="Liberation Sans" font-size="15" font-weight="bold" fill="#000">General - SYS\Solid To SYS\Solid</text></svg></body></html>
